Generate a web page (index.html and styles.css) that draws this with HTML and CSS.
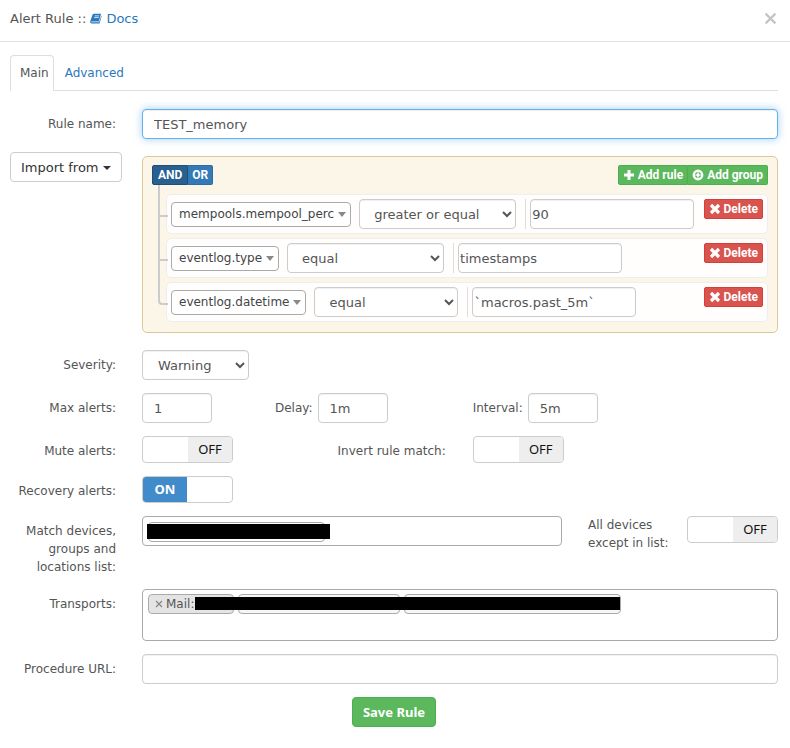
FILE: index.html
```html
<!DOCTYPE html>
<html lang="en">
<head>
    <meta charset="UTF-8">
    <meta name="viewport" content="width=device-width, initial-scale=1.0">
    <title>Alert Rule</title>
    <link rel="stylesheet" href="styles.css">
</head>
<body>
    <header class="modal-header">
        <h5 class="modal-title">Alert Rule ::
            <a href="#"><svg class="icon-book" viewBox="0 0 14 13" aria-hidden="true"><path d="M4.5 1H13L10.3 10H2Q1 10 1.3 11H10.6L13.2 3.2L13.7 3.6L11.2 12.3H1.5Q-.2 12 .3 9.6L2.9 2.2Q3.4 1 4.5 1Z" fill="currentColor"/><path d="M5.4 3.4H10.8M4.8 5.4H10.2" stroke="#fff" stroke-width=".9"/></svg>Docs</a>
        </h5>
        <button type="button" class="close" aria-label="Close"><svg viewBox="0 0 12 12"><path d="M1.5 1.5L10.5 10.5M10.5 1.5L1.5 10.5" stroke="currentColor" stroke-width="2"/></svg></button>
    </header>

    <main class="modal-body">
        <nav class="tabs">
            <a class="tab active" href="#main">Main</a>
            <a class="tab" href="#advanced">Advanced</a>
        </nav>

        <form id="alertForm" class="alert-form">
            <label class="field-label" for="name">Rule name:</label>
            <input type="text" id="name" class="form-control focused" value="TEST_memory" autofocus>

            <div>
                <button type="button" class="btn btn-default">Import from <span class="caret"></span></button>
            </div>
            <div class="builder">
                <div class="builder-header">
                    <div class="btn-group">
                        <button type="button" class="btn-xs btn-primary active">AND</button>
                        <button type="button" class="btn-xs btn-primary">OR</button>
                    </div>
                    <div class="btn-group">
                        <button type="button" class="btn-xs btn-success"><svg viewBox="0 0 12 12"><path d="M6 1V11M1 6H11" stroke="currentColor" stroke-width="3"/></svg>Add rule</button>
                        <button type="button" class="btn-xs btn-success"><svg viewBox="0 0 12 12"><circle cx="6" cy="6" r="4.2" fill="none" stroke="currentColor" stroke-width="2.4"/><path d="M6 3.5V8.5M3.5 6H8.5" stroke="currentColor" stroke-width="1.6"/></svg>Add group</button>
                    </div>
                </div>
                <ul class="rules">
                    <li class="rule">
                        <button type="button" class="select2">mempools.mempool_perc<span class="arrow"></span></button>
                        <select class="form-control operator" aria-label="Operator"><option>greater or equal</option></select>
                        <div class="rule-value"><input type="text" class="form-control" aria-label="Value" value="90"></div>
                        <button type="button" class="btn-xs btn-danger"><svg viewBox="0 0 12 12"><path d="M2 2L10 10M10 2L2 10" stroke="currentColor" stroke-width="3.2"/></svg>Delete</button>
                    </li>
                    <li class="rule">
                        <button type="button" class="select2">eventlog.type<span class="arrow"></span></button>
                        <select class="form-control operator" aria-label="Operator"><option>equal</option></select>
                        <div class="rule-value"><input type="text" class="form-control" aria-label="Value" value="timestamps"></div>
                        <button type="button" class="btn-xs btn-danger"><svg viewBox="0 0 12 12"><path d="M2 2L10 10M10 2L2 10" stroke="currentColor" stroke-width="3.2"/></svg>Delete</button>
                    </li>
                    <li class="rule">
                        <button type="button" class="select2">eventlog.datetime<span class="arrow"></span></button>
                        <select class="form-control operator operator-date" aria-label="Operator"><option>equal</option></select>
                        <div class="rule-value"><input type="text" class="form-control" aria-label="Value" value="`macros.past_5m`"></div>
                        <button type="button" class="btn-xs btn-danger"><svg viewBox="0 0 12 12"><path d="M2 2L10 10M10 2L2 10" stroke="currentColor" stroke-width="3.2"/></svg>Delete</button>
                    </li>
                </ul>
            </div>

            <label class="field-label" for="severity">Severity:</label>
            <div>
                <select id="severity" class="form-control severity"><option>Warning</option></select>
            </div>

            <label class="field-label" for="count">Max alerts:</label>
            <div class="split">
                <div class="split-cell">
                    <input type="text" id="count" class="form-control short" value="1">
                    <div class="inline-field delay">
                        <label class="field-label" for="delay">Delay:</label>
                        <input type="text" id="delay" class="form-control short" value="1m">
                    </div>
                </div>
                <div class="inline-field">
                    <label class="field-label" for="interval">Interval:</label>
                    <input type="text" id="interval" class="form-control short" value="5m">
                </div>
            </div>

            <label class="field-label" for="mute">Mute alerts:</label>
            <div class="split">
                <div class="split-cell">
                    <div class="switch"><input type="checkbox" id="mute"><span class="switch-on">ON</span><span class="switch-handle"></span><span class="switch-off">OFF</span></div>
                    <label class="field-label invert-label" for="invert">Invert rule match:</label>
                </div>
                <div class="switch"><input type="checkbox" id="invert"><span class="switch-on">ON</span><span class="switch-handle"></span><span class="switch-off">OFF</span></div>
            </div>

            <label class="field-label" for="recovery">Recovery alerts:</label>
            <div class="switch"><input type="checkbox" id="recovery" checked><span class="switch-on">ON</span><span class="switch-handle"></span><span class="switch-off">OFF</span></div>

            <span class="field-label" id="mapsLabel">Match devices, groups and locations list:</span>
            <div class="maps">
                <div class="multi" role="listbox" aria-labelledby="mapsLabel">
                    <span class="tag tag-device"></span>
                    <span class="redacted redacted-device"></span>
                </div>
                <label class="maps-label" for="invertMap">All devices except in list:</label>
                <div class="switch"><input type="checkbox" id="invertMap"><span class="switch-on">ON</span><span class="switch-handle"></span><span class="switch-off">OFF</span></div>
            </div>

            <span class="field-label" id="transportsLabel">Transports:</span>
            <div class="multi multi-tall" role="listbox" aria-labelledby="transportsLabel">
                <span class="tag tag-mail"><svg viewBox="0 0 8 8" aria-hidden="true"><path d="M1 1L7 7M7 1L1 7" stroke="currentColor" stroke-width="1.3"/></svg>Mail:</span>
                <span class="tag tag-second"></span>
                <span class="tag tag-third"></span>
                <span class="redacted redacted-transport"></span>
            </div>

            <label class="field-label" for="proc">Procedure URL:</label>
            <input type="text" id="proc" class="form-control">

            <div class="form-footer">
                <button type="submit" class="btn btn-save">Save Rule</button>
            </div>
        </form>
    </main>
</body>
</html>
```

FILE: styles.css
```css
* {
    box-sizing: border-box;
}
body {
    margin: 0;
    background: #fff;
    color: #555;
    font-family: "DejaVu Sans", Verdana, sans-serif;
    font-size: 12px;
    line-height: 18px;
}
button, input, select {
    font-family: inherit;
    margin: 0;
}
a {
    color: #2a78bd;
    text-decoration: none;
}

/* Header */
.modal-header {
    display: flex;
    justify-content: space-between;
    align-items: center;
    height: 42px;
    padding: 0 13px 4px 10px;
    border-bottom: 1px solid #e2e2e2;
}
.modal-title {
    margin: 0;
    font-size: 13px;
    font-weight: normal;
}
.icon-book {
    width: 12px;
    height: 11px;
    margin-right: 4px;
    vertical-align: -1px;
}
.close {
    padding: 0;
    border: 0;
    background: none;
    color: #c4c4c4;
    line-height: 0;
    cursor: pointer;
}
.close svg {
    width: 13px;
    height: 13px;
}

.modal-body {
    padding: 13px 12px 20px 10px;
}

/* Tabs */
.tabs {
    display: flex;
    height: 36px;
    margin-bottom: 18px;
    border-bottom: 1px solid #ddd;
}
.tab {
    height: 36px;
    padding: 8px 10px;
    border: 1px solid transparent;
}
.tab.active {
    padding: 8px 4px 8px 9px;
    border-color: #ddd;
    border-bottom-color: #fff;
    border-radius: 4px 4px 0 0;
    color: #555;
}

/* Form rows */
.alert-form {
    display: grid;
    grid-template-columns: 106px 1fr;
    column-gap: 26px;
    row-gap: 13px;
    align-items: start;
}
.alert-form > div:first-of-type {
    white-space: nowrap;
}
.field-label {
    padding-top: 6px;
    text-align: right;
}
.form-control {
    display: block;
    width: 100%;
    height: 30px;
    padding: 0 11px;
    border: 1px solid #ccc;
    border-radius: 4px;
    background-color: #fff;
    color: #555;
    font-size: 13px;
    box-shadow: inset 0 1px 1px rgba(0, 0, 0, 0.06);
}
.form-control.focused {
    border-color: #66afe9;
    outline: 0;
    box-shadow: inset 0 1px 1px rgba(0, 0, 0, 0.07), 0 0 8px rgba(102, 175, 233, 0.6);
}
.form-control.short {
    width: 70px;
}
.form-control.severity {
    width: 107px;
}
.btn {
    height: 30px;
    padding: 0 10px;
    border: 1px solid #ccc;
    border-radius: 4px;
    background: #fff;
    color: #333;
    font-size: 13px;
    cursor: pointer;
}
.caret {
    display: inline-block;
    border-top: 4px solid #333;
    border-left: 4px solid transparent;
    border-right: 4px solid transparent;
    vertical-align: middle;
}

/* Query builder */
.builder {
    margin: 4px 0;
    padding: 8px 9px 10px;
    border: 1px solid #dcc896;
    border-radius: 5px;
    background: #fcf6e8;
}
.builder-header {
    display: flex;
    justify-content: space-between;
}
.btn-group {
    display: flex;
}
.btn-xs {
    display: flex;
    align-items: center;
    gap: 3px;
    height: 20px;
    padding: 0 4px;
    border: 1px solid;
    border-radius: 2px;
    color: #fff;
    font-family: Roboto, sans-serif;
    font-size: 12px;
    font-weight: bold;
    cursor: pointer;
}
.btn-xs svg {
    width: 12px;
    height: 12px;
}
.btn-group .btn-xs:first-child {
    border-radius: 2px 0 0 2px;
}
.btn-group .btn-xs:last-child {
    border-left-width: 0;
    border-radius: 0 2px 2px 0;
}
.btn-primary {
    background: #337ab7;
    border-color: #2e6da4;
}
.btn-primary.active {
    padding: 0 5px;
    background: #286090;
    border-color: #204d74;
}
.btn-success {
    background: #5cb85c;
    border-color: #4cae4c;
}
.btn-danger {
    align-self: flex-start;
    margin-left: auto;
    background: #d9534f;
    border-color: #d43f3a;
}
.rules {
    margin: 9px 0 0 14px;
    padding: 0;
    list-style: none;
}
.rule {
    position: relative;
    display: flex;
    align-items: center;
    height: 40px;
    padding: 4px;
    border: 1px solid #eee;
    border-radius: 5px;
    background: #fffefc;
}
.rule + .rule {
    margin-top: 4px;
}
/* lines that join the rules to the condition */
.rule::before {
    content: "";
    position: absolute;
    left: -9px;
    top: -25px;
    width: 8px;
    height: 45px;
    border: solid #ccc;
    border-width: 0 0 2px 2px;
}
.rule:first-child::before {
    top: -10px;
    height: 30px;
}
.rule:last-child::before {
    border-bottom-left-radius: 4px;
}
.select2 {
    display: flex;
    align-items: center;
    gap: 4px;
    height: 25px;
    padding: 0 4px 0 7px;
    border: 1px solid #aaa;
    border-radius: 4px;
    background: #fff;
    color: #444;
    font-size: 12px;
}
.arrow {
    border-top: 5px solid #888;
    border-left: 4px solid transparent;
    border-right: 4px solid transparent;
}
.form-control.operator {
    width: 157px;
    margin-left: 8px;
    padding: 0 10px;
}
.form-control.operator-date {
    width: 144px;
}
.rule-value {
    margin-left: 9px;
    padding-left: 4px;
    border-left: 1px solid #ddd;
}
.rule-value .form-control {
    width: 164px;
    padding: 0 1px;
}

/* Two field rows */
.split {
    display: grid;
    grid-template-columns: 52% 48%;
}
.split-cell, .inline-field {
    display: flex;
    align-items: flex-start;
}
.inline-field {
    gap: 5px;
}
.delay {
    margin-left: 63px;
}
.invert-label {
    margin-left: auto;
    margin-right: 27px;
}

/* Switches */
.switch {
    position: relative;
    display: flex;
    flex: none;
    width: 91px;
    height: 27px;
    border: 1px solid #ccc;
    border-radius: 4px;
    overflow: hidden;
    font-family: "Noto Sans", sans-serif;
    font-size: 13px;
    line-height: 25px;
    text-align: center;
}
.switch input {
    position: absolute;
    inset: 0;
    width: 100%;
    height: 100%;
    opacity: 0;
    cursor: pointer;
}
.switch-handle {
    flex: 1;
}
.switch-on, .switch-off {
    width: 44px;
}
.switch-on {
    display: none;
    background: #428bca;
    color: #fff;
    font-weight: bold;
}
.switch-off {
    background: #eee;
    color: #111;
}
.switch input:checked ~ .switch-on {
    display: block;
}
.switch input:checked ~ .switch-off {
    display: none;
}

/* Multi selects */
.maps {
    display: flex;
    align-items: flex-start;
}
.multi {
    position: relative;
    display: flex;
    flex: 1;
    align-items: flex-start;
    gap: 4px;
    height: 30px;
    padding: 5px;
    border: 1px solid #aaa;
    border-radius: 4px;
}
.multi-tall {
    height: 52px;
    padding: 4px 5px;
}
.maps-label {
    width: 125px;
    padding: 0 16px 0 26px;
}
.tag {
    display: flex;
    align-items: center;
    gap: 3px;
    height: 20px;
    padding: 0 6px;
    border: 1px solid #aaa;
    border-radius: 4px;
    background: #e4e4e4;
}
.tag svg {
    width: 8px;
    height: 8px;
    color: #888;
}
.tag-device {
    width: 177px;
    background: #fff;
}
.tag-mail {
    width: 86px;
}
.tag-second {
    width: 162px;
    background: #f6f6f6;
}
.tag-third {
    width: 217px;
    background: #f6f6f6;
}
.redacted {
    position: absolute;
    background: #000;
}
.redacted-device {
    left: 4px;
    top: 7px;
    width: 183px;
    height: 15px;
}
.redacted-transport {
    left: 52px;
    top: 7px;
    width: 425px;
    height: 13px;
}

.form-footer {
    grid-column: 1 / -1;
    text-align: center;
}
.btn-save {
    border-color: #4cae4c;
    background: #5cb85c;
    color: #fff;
    font-family: "Noto Sans", sans-serif;
    font-weight: bold;
}
```
